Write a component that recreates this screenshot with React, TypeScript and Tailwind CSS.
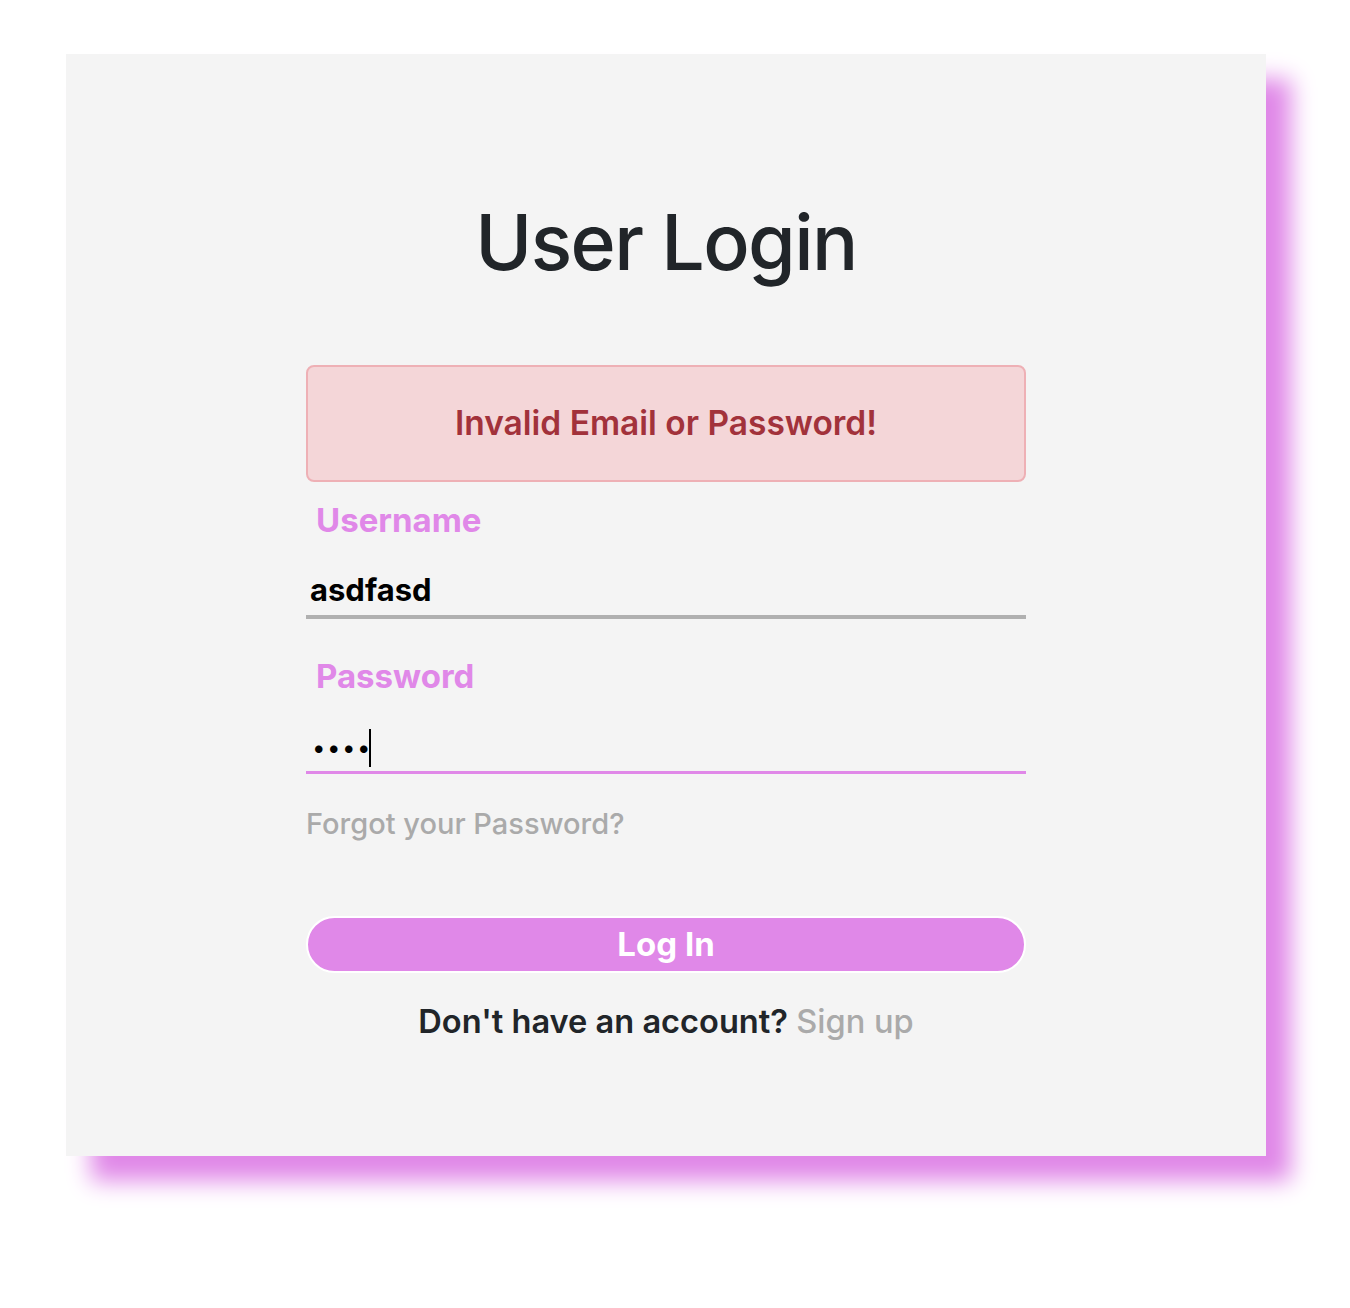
import React from "react";

export default function App() {
  return (
    <div className="min-h-[1308px] w-[1350px] bg-white pt-[54px] pl-[66px] font-['Inter','Noto_Sans',sans-serif]">
      <div className="w-[1200px] h-[1102px] bg-[#f4f4f4] shadow-[25px_25px_22px_#e088e8] flex flex-col items-center">
        <h1 className="mt-[140px] text-[77px] leading-[96px] font-medium text-[#212529] tracking-[-1.6px]">
          User Login
        </h1>
        <div className="w-[720px] mt-[75px] flex flex-col">
          <div className="h-[117px] rounded-[8px] border-2 border-[#eeb0b5] bg-[#f4d6d8] flex items-center justify-center">
            <span className="text-[33.5px] font-semibold text-[#a2323b]">Invalid Email or Password!</span>
          </div>
          <label className="mt-[18px] pl-[10px] text-[33px] leading-[40px] font-bold text-[#e088e8]">Username</label>
          <div className="mt-[30px] pl-[4px] h-[49px] border-b-[4px] border-[#b0b0b0] text-[31px] leading-[40px] font-bold text-black">
            asdfasd
          </div>
          <label className="mt-[37px] pl-[10px] text-[33px] leading-[40px] font-bold text-[#e088e8]">Password</label>
          <div className="mt-[28px] pl-[6px] h-[50px] border-b-[3px] border-[#e088e8] flex items-center">
            <span className="text-[24px] leading-[40px] text-black tracking-[1.5px]">••••</span>
            <span className="ml-[-3px] w-[2px] h-[38px] bg-black" />
          </div>
          <a className="mt-[32px] text-[29px] leading-[36px] font-medium text-[#aaaaaa]">Forgot your Password?</a>
          <button className="mt-[74px] h-[57px] rounded-full border-2 border-white bg-[#e088e8] text-white text-[33px] font-bold leading-none">
            Log In
          </button>
          <p className="mt-[28px] text-center text-[32.6px] leading-[40px] font-semibold text-[#212529]">
            Don't have an account? <a className="font-medium text-[#aaaaaa]">Sign up</a>
          </p>
        </div>
      </div>
    </div>
  );
}
